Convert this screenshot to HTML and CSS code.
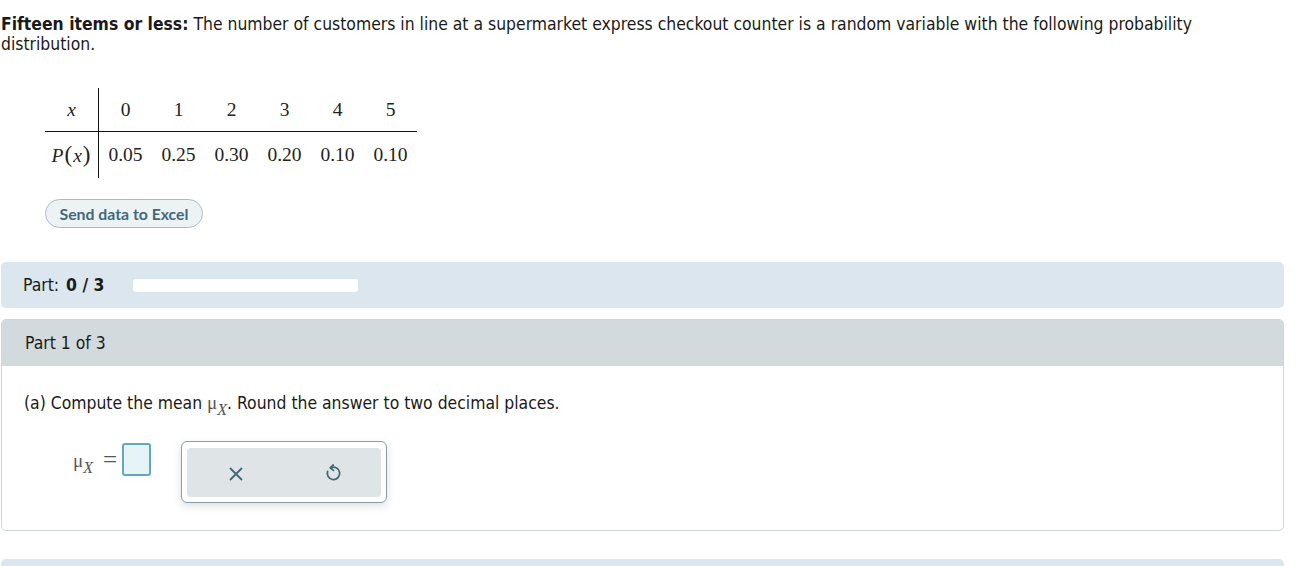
FILE: index.html
```html
<!DOCTYPE html>
<html>
<head>
<meta charset="utf-8">
<link rel="stylesheet" href="styles.css">
</head>
<body>
<div class="page">
  <p class="intro"><b>Fifteen items or less:</b> The number of customers in line at a supermarket express checkout counter is a random variable with the following probability distribution.</p>

  <table class="dist">
    <tr class="head">
      <td class="lbl"><i>x</i></td>
      <td>0</td><td>1</td><td>2</td><td>3</td><td>4</td><td>5</td>
    </tr>
    <tr class="vals">
      <td class="lbl"><i>P</i><span class="paren">(</span><i>x</i><span class="paren">)</span></td>
      <td>0.05</td><td>0.25</td><td>0.30</td><td>0.20</td><td>0.10</td><td>0.10</td>
    </tr>
  </table>

  <button class="excel">Send data to Excel</button>

  <div class="partbar">
    <span class="partlabel">Part: <b>0 / 3</b></span>
    <span class="progress"></span>
  </div>

  <div class="card">
    <div class="cardhead">Part 1 of 3</div>
    <div class="cardbody">
      <p class="question">(a) Compute the mean <span class="mu">μ<sub>X</sub></span>. Round the answer to two decimal places.</p>
      <div class="answer">
        <span class="mu big">μ<sub>X</sub></span>
        <span class="eq">=</span>
        <span class="input"></span>
        <div class="tools">
          <div class="toolsinner">
            <svg class="ico" width="18" height="18" viewBox="0 0 18 18"><path d="M3.5 3.5 L14.5 14.5 M14.5 3.5 L3.5 14.5" stroke="#3f6875" stroke-width="1.8" fill="none" stroke-linecap="round"/></svg>
            <svg class="ico" width="18" height="20" viewBox="0 0 18 20"><path d="M7.2 3.6 A6.2 6.2 0 1 1 3.6 7.4" stroke="#3f6875" stroke-width="1.8" fill="none" stroke-linecap="round"/><path d="M9.2 1 L6.2 3.8 L9.4 6.4" stroke="#3f6875" stroke-width="1.8" fill="none" stroke-linecap="round" stroke-linejoin="round"/></svg>
          </div>
        </div>
      </div>
    </div>
  </div>

  <div class="nextbar"></div>
</div>
</body>
</html>
```
FILE: styles.css
```css
html, body {
  margin: 0;
  padding: 0;
  background: #ffffff;
}
body {
  font-family: "DejaVu Sans Condensed", "DejaVu Sans", sans-serif;
  font-size: 17.4px;
  color: #1a1a1a;
}
.page {
  width: 1283px;
  padding: 14px 0 0 1px;
}
.intro {
  margin: 0;
  line-height: 20px;
  width: 1230px;
}
.intro b {
  font-weight: bold;
}
.dist {
  border-collapse: collapse;
  margin: 34px 0 0 44px;
  font-family: "Liberation Serif", serif;
  font-size: 19.5px;
  color: #222;
}
.dist td {
  text-align: center;
  width: 53px;
  padding: 0;
}
.dist td.lbl {
  width: 53px;
  border-right: 1px solid #111;
}
.dist tr.head td {
  height: 42px;
  vertical-align: middle;
  padding-top: 1px;
  border-bottom: 1px solid #111;
}
.dist tr.vals td {
  height: 45px;
  vertical-align: middle;
  padding-bottom: 1px;
}
.paren {
  font-size: 23px;
  margin: 0 1px;
}
.excel {
  display: block;
  margin: 21px 0 0 44px;
  height: 29px;
  padding: 0;
  width: 158px;
  border: 1px solid #a7bcc4;
  border-radius: 15px;
  background: #edf3f5;
  color: #44687a;
  font-family: Lato, "Open Sans", sans-serif;
  font-weight: bold;
  font-size: 15.8px;
}
.partbar {
  margin-top: 34px;
  height: 46px;
  background: #dbe6ef;
  border-radius: 5px;
  display: flex;
  align-items: center;
  padding-left: 22px;
}
.partlabel b {
  font-weight: bold;
  margin-left: 2px;
}
.progress {
  margin-left: 29px;
  width: 225px;
  height: 13px;
  background: #ffffff;
  border-radius: 3px;
}
.card {
  margin-top: 11px;
  border: 1px solid #cdd7db;
  border-radius: 5px;
  overflow: hidden;
  height: 210px;
}
.cardhead {
  height: 46px;
  background: #d2dadd;
  display: flex;
  align-items: center;
  padding-left: 23px;
}
.cardbody {
  padding: 27px 0 0 22px;
}
.question {
  margin: 0;
  line-height: 20px;
}
.mu {
  font-family: "Liberation Serif", serif;
  font-size: 19px;
  color: #555;
}
.mu sub {
  font-style: italic;
  font-size: 16px;
  vertical-align: -6px;
  line-height: 0;
}
.answer {
  display: flex;
  align-items: flex-start;
  margin-top: 28px;
  padding-left: 49px;
}
.mu.big {
  margin-top: 9px;
}
.eq {
  font-family: "Liberation Serif", serif;
  font-size: 25px;
  line-height: 25px;
  color: #555;
  margin: 6px 0 0 10px;
}
.input {
  display: block;
  margin-left: 5px;
  margin-top: 2px;
  width: 25px;
  height: 29px;
  border: 2px solid #62aabb;
  border-radius: 3px;
  background: #e6f4f8;
}
.tools {
  margin-left: 30px;
  border: 1px solid #8a9ea6;
  border-radius: 6px;
  background: #ffffff;
  box-shadow: 0 3px 8px rgba(60, 80, 90, 0.18);
  padding: 6px 5px 5px 5px;
  box-sizing: border-box;
  width: 206px;
  height: 62px;
}
.toolsinner {
  height: 100%;
  background: #dfe5e7;
  border-radius: 4px;
  display: flex;
  align-items: center;
  justify-content: space-around;
  padding-top: 3px;
  box-sizing: border-box;
}
.nextbar {
  margin-top: 28px;
  height: 20px;
  background: #dbe6ef;
  border-radius: 5px;
}
```
